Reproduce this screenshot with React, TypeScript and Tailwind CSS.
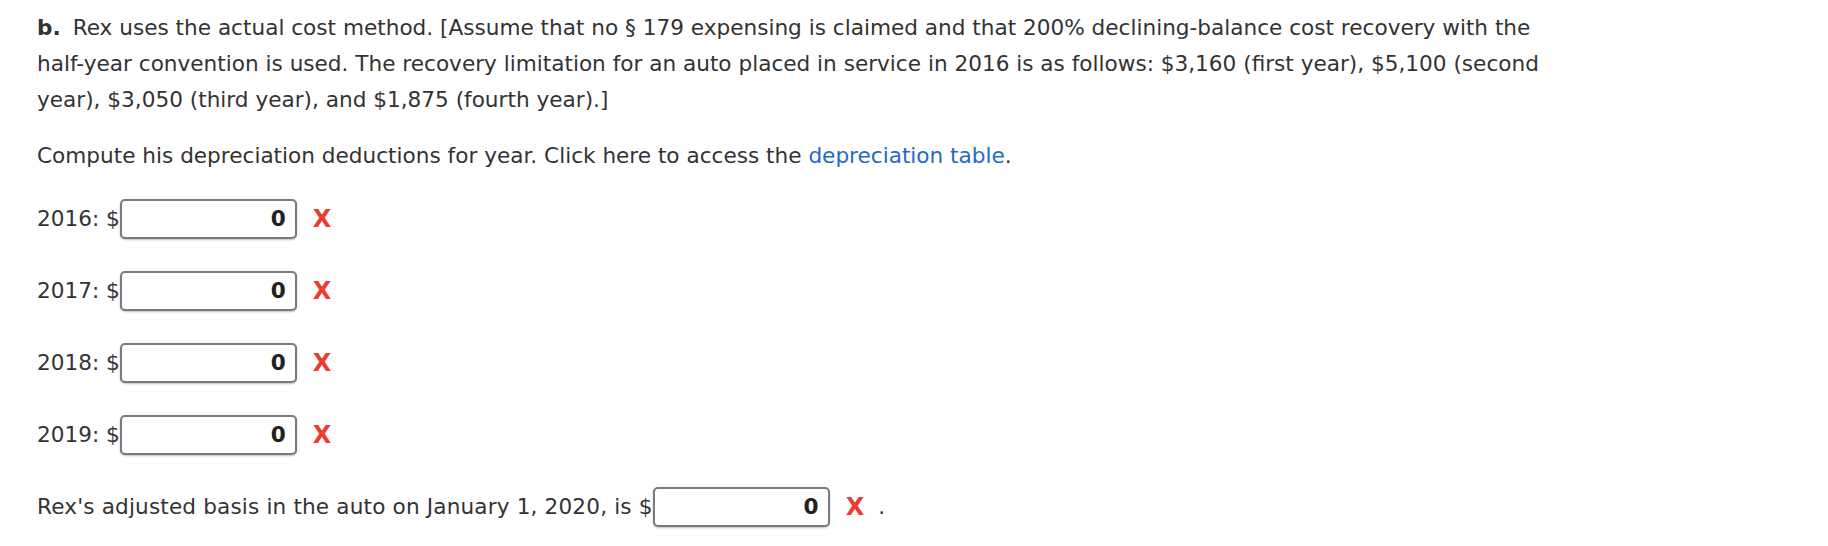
const font = { fontFamily: '"DejaVu Sans", Verdana, sans-serif' };

const AmountField = () => (
  <div className="flex h-[40px] w-[177px] items-center justify-end rounded-[5px] border-2 border-[#7b7b7b] bg-white pr-[9px] font-bold text-[#222] shadow-[0_1px_2px_rgba(0,0,0,0.25)]">
    0
  </div>
);

const WrongMark = () => (
  <span className="ml-[16px] text-[24px] font-bold leading-none text-[#ea3c30]">X</span>
);

const years = ['2016', '2017', '2018', '2019'];

const App = () => {
  return (
    <div
      className="min-h-[546px] w-[1828px] bg-white pl-[37px] pt-[10px] text-[21.6px] leading-[36px] text-[#333]"
      style={font}
    >
      {/* 문제 설명 */}
      <p>
        <span className="mr-[12px] font-bold">b.</span>Rex uses the actual cost method. [Assume that no § 179 expensing is
        claimed and that 200% declining-balance cost recovery with the
        <br />
        half-year convention is used. The recovery limitation for an auto placed in service in 2016 is as follows: $3,160
        (first year), $5,100 (second
        <br />
        year), $3,050 (third year), and $1,875 (fourth year).]
      </p>

      <p className="mt-[20px]">
        Compute his depreciation deductions for year. Click here to access the{' '}
        <span className="cursor-pointer text-[#1f6cc4]">depreciation table</span>.
      </p>

      {/* 연도별 입력 */}
      <div className="mt-[25px] flex flex-col gap-[32px]">
        {years.map((year) => (
          <div key={year} className="flex h-[40px] items-center">
            <span>{year}: $</span>
            <AmountField />
            <WrongMark />
          </div>
        ))}

        <div className="flex h-[40px] items-center">
          <span className="tracking-[0.15px]">Rex's adjusted basis in the auto on January 1, 2020, is $</span>
          <AmountField />
          <WrongMark />
          <span className="ml-[14px]">.</span>
        </div>
      </div>
    </div>
  );
};

export default App;
